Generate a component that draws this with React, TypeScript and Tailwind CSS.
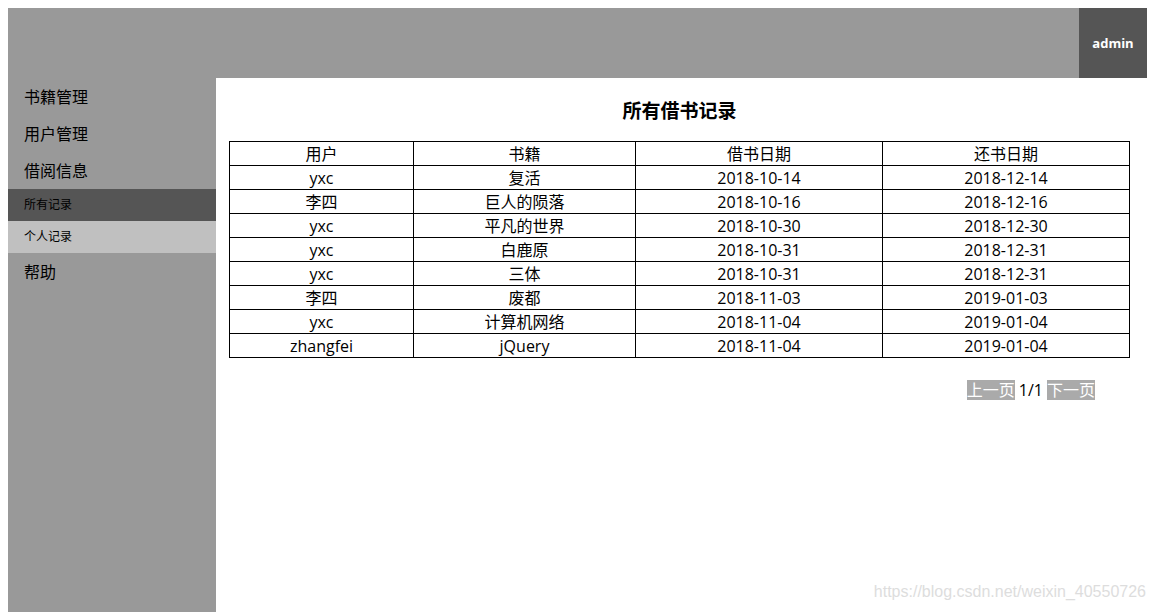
import React from 'react';

const records = [
  { user: 'yxc', book: '复活', borrow: '2018-10-14', back: '2018-12-14' },
  { user: '李四', book: '巨人的陨落', borrow: '2018-10-16', back: '2018-12-16' },
  { user: 'yxc', book: '平凡的世界', borrow: '2018-10-30', back: '2018-12-30' },
  { user: 'yxc', book: '白鹿原', borrow: '2018-10-31', back: '2018-12-31' },
  { user: 'yxc', book: '三体', borrow: '2018-10-31', back: '2018-12-31' },
  { user: '李四', book: '废都', borrow: '2018-11-03', back: '2019-01-03' },
  { user: 'yxc', book: '计算机网络', borrow: '2018-11-04', back: '2019-01-04' },
  { user: 'zhangfei', book: 'jQuery', borrow: '2018-11-04', back: '2019-01-04' },
];

const font = { fontFamily: '"Open Sans", "Noto Sans CJK SC", sans-serif' };

const App: React.FC = () => {
  return (
    <div className="relative min-h-screen flex flex-col p-2 pb-0 bg-white text-black" style={font}>
      {/* top bar */}
      <div className="h-[70px] flex justify-end bg-[#999999]">
        <div className="w-[68px] flex items-center justify-center pt-[2px] bg-[#555555] text-white text-[13px] font-bold">
          admin
        </div>
      </div>

      <div className="flex flex-1">
        {/* side menu */}
        <div className="w-[208px] bg-[#999999] text-[16px]">
          <div className="h-[37px] flex items-center pl-4">书籍管理</div>
          <div className="h-[37px] flex items-center pl-4">用户管理</div>
          <div className="h-[37px] flex items-center pl-4">借阅信息</div>
          <div className="h-8 flex items-center pl-4 text-[12px] bg-[#555555]">所有记录</div>
          <div className="h-8 flex items-center pl-4 text-[12px] bg-[#c0c0c0]">个人记录</div>
          <div className="h-[37px] flex items-center pl-4">帮助</div>
        </div>

        {/* content */}
        <div className="flex-1 bg-white pl-[13px] pr-[17px]">
          <h2 className="text-center text-[19px] font-bold mt-[21px] mb-[18px] leading-6">所有借书记录</h2>
          <table className="w-full border-collapse text-[16px] text-center">
            <thead>
              <tr className="h-6">
                <th className="border border-black font-normal w-[184px] p-0 pt-[1px] leading-[22px]">用户</th>
                <th className="border border-black font-normal w-[222px] p-0 pt-[1px] leading-[22px]">书籍</th>
                <th className="border border-black font-normal w-[247px] p-0 pt-[1px] leading-[22px]">借书日期</th>
                <th className="border border-black font-normal p-0 pt-[1px] leading-[22px]">还书日期</th>
              </tr>
            </thead>
            <tbody>
              {records.map((r, i) => (
                <tr key={i} className="h-6">
                  <td className="border border-black p-0 pt-[1px] leading-[22px]">{r.user}</td>
                  <td className="border border-black p-0 pt-[1px] leading-[22px]">{r.book}</td>
                  <td className="border border-black p-0 pt-[1px] leading-[22px]">{r.borrow}</td>
                  <td className="border border-black p-0 pt-[1px] leading-[22px]">{r.back}</td>
                </tr>
              ))}
            </tbody>
          </table>

          <div className="flex justify-end items-center mt-[22px] mr-[35px] text-[16px] leading-5 gap-1">
            <span className="bg-[#aaaaaa] text-white">上一页</span>
            <span>1/1</span>
            <span className="bg-[#aaaaaa] text-white">下一页</span>
          </div>
        </div>
      </div>

      <div className="absolute right-[9px] bottom-[8px] text-[16px] text-[#dddddd]" style={{ fontFamily: '"Liberation Sans", sans-serif' }}>
        https://blog.csdn.net/weixin_40550726
      </div>
    </div>
  );
};

export default App;
